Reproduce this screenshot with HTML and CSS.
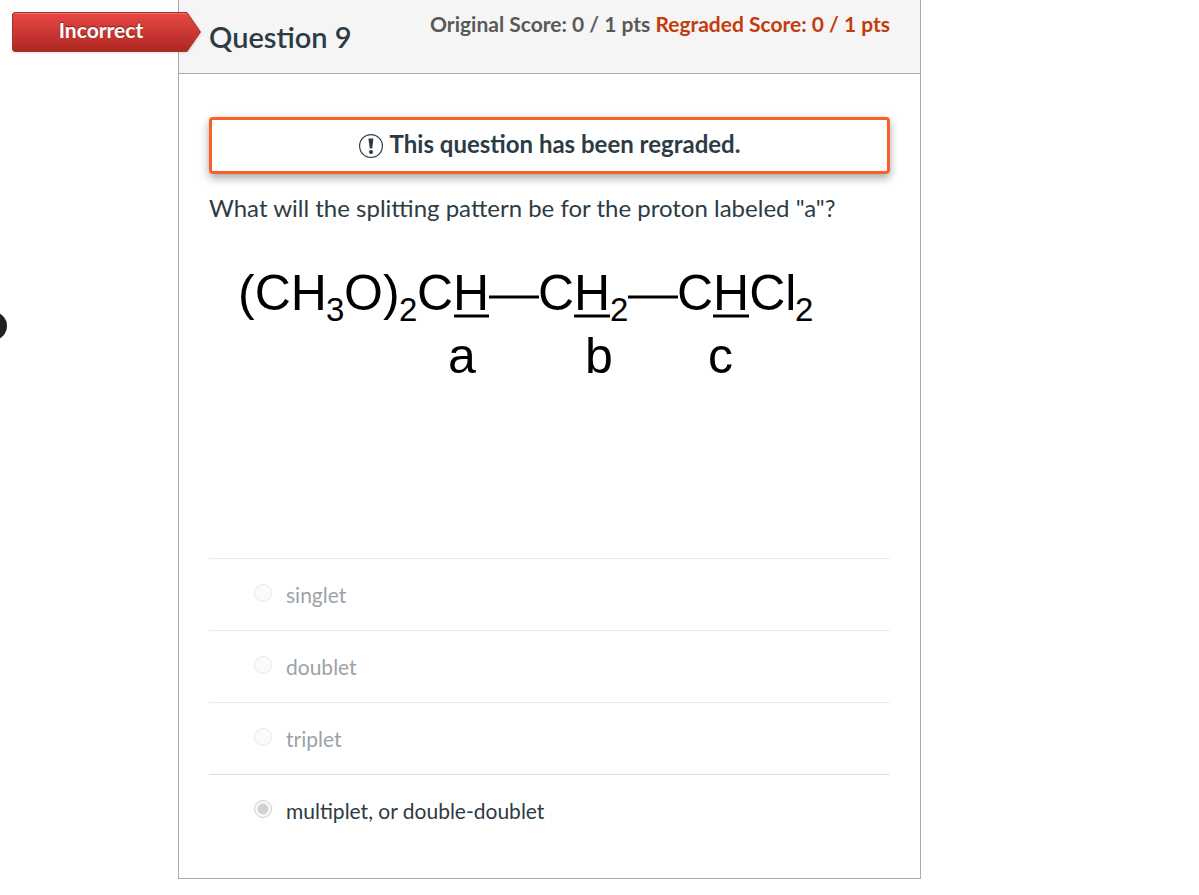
FILE: index.html
```
<!DOCTYPE html>
<html lang="en">
<head>
  <meta charset="UTF-8">
  <meta name="viewport" content="width=device-width, initial-scale=1.0">
  <title>Quiz Results</title>
  <link rel="stylesheet" href="styles.css">
</head>
<body>

<div class="side-dot"></div>

<main class="question">
  <div class="flag">
    <svg class="flag-shape" viewBox="0 0 190 40" aria-hidden="true">
      <defs>
        <linearGradient id="flag-red" x1="0" y1="0" x2="0" y2="1">
          <stop offset="0" stop-color="#e84844"/>
          <stop offset="1" stop-color="#ae2722"/>
        </linearGradient>
      </defs>
      <path d="M3 .5H175L188.5 20L175 39.5H3Q.5 39.5 .5 37V3Q.5 .5 3 .5Z" fill="url(#flag-red)" stroke="#a8302d"/>
      <path d="M3 1.5H174" stroke="#ed6d69" fill="none"/>
    </svg>
    <span class="flag-text">Incorrect</span>
  </div>

  <header class="question-header">
    <h1>Question 9</h1>
    <div class="score">Original Score: 0 / 1 pts <span class="regraded">Regraded Score: 0 / 1 pts</span></div>
  </header>

  <div class="question-body">
    <div class="notice">
      <svg class="notice-icon" viewBox="0 0 24 24" aria-hidden="true">
        <circle cx="12" cy="12" r="11.4" fill="none" stroke="#2d3b45" stroke-width="1.2"/>
        <path d="M9.4 4.6H14.4L13.2 14.6H10.8Z" fill="#2d3b45"/>
        <circle cx="12" cy="18" r="2" fill="#2d3b45"/>
      </svg>
      <strong>This question has been regraded.</strong>
    </div>

    <p class="prompt">What will the splitting pattern be for the proton labeled "a"?</p>

    <svg class="formula" viewBox="0 0 620 300" role="img" aria-label="Structural formula with protons a, b and c">
      <g class="atoms">
        <text x="29" y="70">(CH</text>
        <text x="135" y="70">O)</text>
        <text x="208" y="70">CH</text>
        <text x="329" y="70">CH</text>
        <text x="468" y="70">CHCl</text>
        <text x="239" y="133">a</text>
        <text x="376" y="133">b</text>
        <text x="499" y="133">c</text>
      </g>
      <g class="counts">
        <text x="117" y="81">3</text>
        <text x="190" y="81">2</text>
        <text x="401" y="81">2</text>
        <text x="586" y="81">2</text>
      </g>
      <g class="bonds">
        <path d="M280 57H330M419 57H469"/>
        <path d="M245 76H280M365 76H401M504 76H540"/>
      </g>
    </svg>

    <div class="answers">
      <div class="answer">
        <input type="radio" name="answer" id="answer1" disabled>
        <label for="answer1">singlet</label>
      </div>
      <div class="answer">
        <input type="radio" name="answer" id="answer2" disabled>
        <label for="answer2">doublet</label>
      </div>
      <div class="answer">
        <input type="radio" name="answer" id="answer3" disabled>
        <label for="answer3">triplet</label>
      </div>
      <div class="answer selected">
        <input type="radio" name="answer" id="answer4" disabled checked>
        <label for="answer4">multiplet, or double-doublet</label>
      </div>
    </div>
  </div>
</main>

</body>
</html>
```
FILE: styles.css
```
* {
  box-sizing: border-box;
}

body {
  margin: 0;
  background-color: #fff;
  color: #2d3b45;
  font-family: Lato, "Liberation Sans", sans-serif;
}

.side-dot {
  position: absolute;
  top: 312px;
  left: -21px;
  width: 28px;
  height: 28px;
  border-radius: 50%;
  background-color: #222;
}

.question {
  position: relative;
  margin: 0 278px 16px 178px;
  border: 1px solid #aaa;
  border-top: none;
}

/* ribbon that hangs over the left edge of the card */
.flag {
  position: absolute;
  top: 12px;
  left: -167px;
  width: 190px;
  height: 40px;
}

.flag-shape {
  position: absolute;
  width: 100%;
  height: 100%;
  filter: drop-shadow(1px 1px 1px rgba(0, 0, 0, 0.1));
}

.flag-text {
  position: relative;
  display: block;
  padding-right: 12px;
  text-align: center;
  font-size: 21px;
  font-weight: 700;
  line-height: 36px;
  color: #fff;
  text-shadow: 0 -1px 1px rgba(0, 0, 0, 0.4);
}

.question-header {
  display: flex;
  justify-content: space-between;
  align-items: flex-start;
  height: 74px;
  padding: 10px 30px;
  background-color: #f5f5f5;
  border-bottom: 1px solid #aaa;
}

h1 {
  margin: 8px 0 0;
  font-size: 29px;
  font-weight: 600;
  line-height: 38px;
}

.score {
  font-size: 21px;
  font-weight: 700;
  line-height: 28px;
  color: #595959;
}

.regraded {
  color: #c23c0d;
}

.question-body {
  padding: 43px 30px 31px;
}

.notice {
  display: flex;
  justify-content: center;
  align-items: center;
  gap: 7px;
  height: 57px;
  border: 3px solid #fc5e27;
  border-radius: 4px;
  box-shadow: 0 4px 10px rgba(0, 0, 0, 0.35);
  font-size: 24px;
  line-height: 36px;
}

.notice strong {
  padding-bottom: 3px;
}

.notice-icon {
  width: 24px;
  height: 24px;
}

.prompt {
  margin: 16px 0 14px;
  font-size: 24px;
  line-height: 36px;
}

.formula {
  display: block;
  width: 620px;
  max-width: 100%;
  fill: #000;
  font-family: "Liberation Sans", Arial, sans-serif;
}

.atoms {
  font-size: 50px;
}

.counts {
  font-size: 33px;
}

.bonds {
  stroke: #000;
  stroke-width: 3px;
}

.answers {
  margin-top: 18px;
}

.answer {
  display: flex;
  align-items: center;
  gap: 14px;
  min-height: 72px;
  padding-left: 45px;
  border-top: 1px solid #ebebeb;
  font-size: 21px;
  line-height: 32px;
}

.answer.selected {
  min-height: 73px;
  border-top-color: #ddd;
}

.answer input {
  width: 18px;
  height: 18px;
  margin: 0 0 4px;
}

.answer:not(.selected) input {
  opacity: 0.5;
}

.answer:not(.selected) label {
  color: #9ca2a7;
}
```
